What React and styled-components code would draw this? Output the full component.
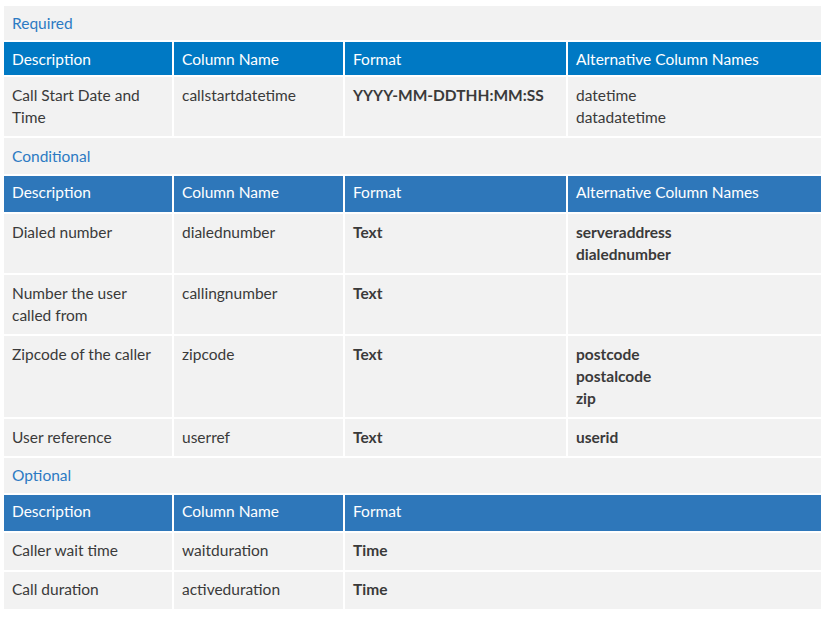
import React from "react";
import styled, { createGlobalStyle } from "styled-components";

const Global = createGlobalStyle`
  html, body { margin: 0; padding: 0; background: #ffffff; }
  body { font-family: "Lato", "Liberation Sans", sans-serif; }
`;

const Page = styled.div`
  padding: 4px 3px 0 2px;
`;

const Table = styled.table`
  width: 819px;
  border-collapse: collapse;
  table-layout: fixed;
  font-size: 15.5px;
  line-height: 22px;
  color: #3a3a3a;
`;

const SectionCell = styled.td`
  background: #f2f2f2;
  border: 2px solid #ffffff;
  color: #2c7ac3;
  padding: ${(p) => p.$pad || "6px 8px 6px"};
  line-height: 22px;
`;

const HeadCell = styled.th`
  background: ${(p) => (p.$bright ? "#0079c4" : "#2e77ba")};
  color: #ffffff;
  font-weight: 400;
  text-align: left;
  border: 2px solid #ffffff;
  padding: ${(p) => (p.$bright ? "6px 8px 5px" : "5px 8px 9px")};
  vertical-align: middle;
`;

const Cell = styled.td`
  background: #f2f2f2;
  border: 2px solid #ffffff;
  padding: ${(p) => (p.$tight ? "6px 8px 9px" : "7px 8px 8px")};
  vertical-align: top;
  font-weight: ${(p) => (p.$bold ? 700 : 400)};
`;

const Line = styled.div``;

const sections = [
  {
    label: "Required",
    bright: true,
    four: true,
    rows: [
      ["Call Start Date and Time", "callstartdatetime", "YYYY-MM-DDTHH:MM:SS", ["datetime", "datadatetime"], false],
    ],
  },
  {
    label: "Conditional",
    four: true,
    rows: [
      ["Dialed number", "dialednumber", "Text", ["serveraddress", "dialednumber"], true],
      ["Number the user called from", "callingnumber", "Text", [], true],
      ["Zipcode of the caller", "zipcode", "Text", ["postcode", "postalcode", "zip"], true],
      ["User reference", "userref", "Text", ["userid"], true],
    ],
  },
  {
    label: "Optional",
    four: false,
    tight: true,
    rows: [
      ["Caller wait time", "waitduration", "Time"],
      ["Call duration", "activeduration", "Time"],
    ],
  },
];

export default function App() {
  return (
    <Page>
      <Global />
      <Table>
        <colgroup>
          <col style={{ width: "170px" }} />
          <col style={{ width: "171px" }} />
          <col style={{ width: "223px" }} />
          <col style={{ width: "255px" }} />
        </colgroup>
        <tbody>
          {sections.map((s, si) => (
            <React.Fragment key={s.label}>
              <tr>
                <SectionCell
                  colSpan={4}
                  $pad={si === 0 ? "6px 8px 6px" : si === 1 ? "7px 8px 7px" : "6px 8px 7px"}
                >
                  {s.label}
                </SectionCell>
              </tr>
              <tr>
                <HeadCell $bright={s.bright}>Description</HeadCell>
                <HeadCell $bright={s.bright}>Column Name</HeadCell>
                <HeadCell $bright={s.bright} colSpan={s.four ? 1 : 2}>Format</HeadCell>
                {s.four && <HeadCell $bright={s.bright}>Alternative Column Names</HeadCell>}
              </tr>
              {s.rows.map((r) => (
                <tr key={r[1]}>
                  <Cell $tight={s.tight}>{r[0]}</Cell>
                  <Cell $tight={s.tight}>{r[1]}</Cell>
                  <Cell $tight={s.tight} $bold colSpan={s.four ? 1 : 2}>{r[2]}</Cell>
                  {s.four && (
                    <Cell $bold={r[4]}>
                      {r[3].map((n) => (
                        <Line key={n}>{n}</Line>
                      ))}
                    </Cell>
                  )}
                </tr>
              ))}
            </React.Fragment>
          ))}
        </tbody>
      </Table>
    </Page>
  );
}
